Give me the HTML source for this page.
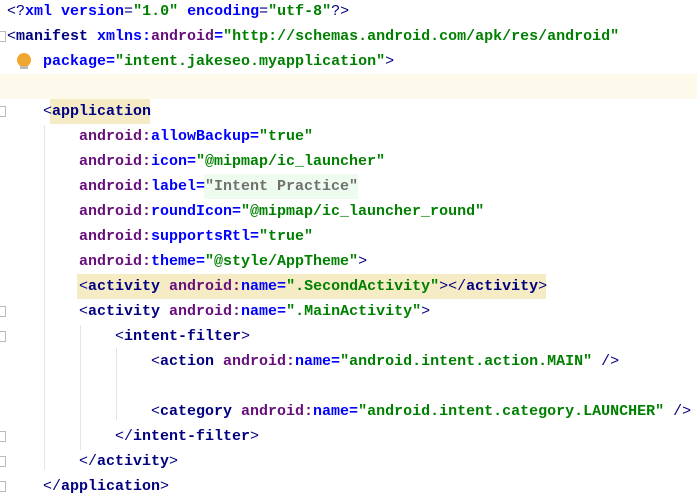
<!DOCTYPE html>
<html><head><meta charset="utf-8"><style>
body{margin:0;width:697px;height:500px;background:#fff;overflow:hidden;position:relative;font-family:"Liberation Mono",monospace;font-size:15px;}
.l{position:absolute;left:0;height:25px;line-height:25px;white-space:pre;}
.t{color:#000080;font-weight:bold}
.b{color:#000080}
.a{color:#0000ff;font-weight:bold}
.n{color:#660e7a;font-weight:bold}
.v{color:#008000;font-weight:bold}
.g{color:#707070;font-weight:bold}
.hl{position:absolute;}
.guide{position:absolute;width:1px;background:#e4e4e4}
.fold{position:absolute;left:0;width:5px;height:9px;border:1px solid #bbb;border-left:none;background:#fff}
</style></head><body>
<div class="hl" style="left:0;top:74px;width:697px;height:25px;background:#fdfaeb"></div>
<div class="hl" style="left:50px;top:99px;width:100px;height:25px;background:#f5ebc4"></div>
<div class="hl" style="left:77px;top:274px;width:469px;height:25px;background:#f5ebc4"></div>
<div class="hl" style="left:204px;top:174px;width:154px;height:25px;background:#edfcee"></div>
<div class="guide" style="left:44px;top:125px;height:345px"></div>
<div class="guide" style="left:80px;top:325px;height:125px"></div>
<div class="guide" style="left:116px;top:348px;height:72px"></div>
<div class="fold" style="top:31px"></div>
<div class="fold" style="top:106px"></div>
<div class="fold" style="top:306px"></div>
<div class="fold" style="top:331px"></div>
<div class="fold" style="top:431px"></div>
<div class="fold" style="top:456px"></div>
<div class="fold" style="top:481px"></div>
<div style="position:absolute;left:17px;top:53px;width:14px;height:14px;border-radius:50%;background:#f0a732"></div>
<div style="position:absolute;left:20px;top:66px;width:8px;height:3px;background:#bbb"></div>

<div class="l" style="top:-1px;left:7px"><span class="b">&lt;?</span><span class="a">xml version</span><span class="b">=</span><span class="v">"1.0"</span> <span class="a">encoding</span><span class="b">=</span><span class="v">"utf-8"</span><span class="b">?&gt;</span></div>
<div class="l" style="top:24px;left:7px"><span class="b">&lt;</span><span class="t">manifest </span><span class="a">xmlns:</span><span class="n">android</span><span class="a">=</span><span class="v">"http://schemas.android.com/apk/res/android"</span></div>
<div class="l" style="top:49px;left:43px"><span class="a">package</span><span class="a">=</span><span class="v">"intent.jakeseo.myapplication"</span><span class="b">&gt;</span></div>
<div class="l" style="top:99px;left:43px"><span class="b">&lt;</span><span class="t">application</span></div>
<div class="l" style="top:124px;left:79px"><span class="n">android:</span><span class="a">allowBackup=</span><span class="v">"true"</span></div>
<div class="l" style="top:149px;left:79px"><span class="n">android:</span><span class="a">icon=</span><span class="v">"@mipmap/ic_launcher"</span></div>
<div class="l" style="top:174px;left:79px"><span class="n">android:</span><span class="a">label=</span><span class="g">"Intent Practice"</span></div>
<div class="l" style="top:199px;left:79px"><span class="n">android:</span><span class="a">roundIcon=</span><span class="v">"@mipmap/ic_launcher_round"</span></div>
<div class="l" style="top:224px;left:79px"><span class="n">android:</span><span class="a">supportsRtl=</span><span class="v">"true"</span></div>
<div class="l" style="top:249px;left:79px"><span class="n">android:</span><span class="a">theme=</span><span class="v">"@style/AppTheme"</span><span class="b">&gt;</span></div>
<div class="l" style="top:274px;left:79px"><span class="b">&lt;</span><span class="t">activity </span><span class="n">android:</span><span class="a">name=</span><span class="v">".SecondActivity"</span><span class="b">&gt;&lt;/</span><span class="t">activity</span><span class="b">&gt;</span></div>
<div class="l" style="top:299px;left:79px"><span class="b">&lt;</span><span class="t">activity </span><span class="n">android:</span><span class="a">name=</span><span class="v">".MainActivity"</span><span class="b">&gt;</span></div>
<div class="l" style="top:324px;left:115px"><span class="b">&lt;</span><span class="t">intent-filter</span><span class="b">&gt;</span></div>
<div class="l" style="top:349px;left:151px"><span class="b">&lt;</span><span class="t">action </span><span class="n">android:</span><span class="a">name=</span><span class="v">"android.intent.action.MAIN"</span> <span class="b">/&gt;</span></div>
<div class="l" style="top:399px;left:151px"><span class="b">&lt;</span><span class="t">category </span><span class="n">android:</span><span class="a">name=</span><span class="v">"android.intent.category.LAUNCHER"</span> <span class="b">/&gt;</span></div>
<div class="l" style="top:424px;left:115px"><span class="b">&lt;/</span><span class="t">intent-filter</span><span class="b">&gt;</span></div>
<div class="l" style="top:449px;left:79px"><span class="b">&lt;/</span><span class="t">activity</span><span class="b">&gt;</span></div>
<div class="l" style="top:474px;left:43px"><span class="b">&lt;/</span><span class="t">application</span><span class="b">&gt;</span></div>
</body></html>
